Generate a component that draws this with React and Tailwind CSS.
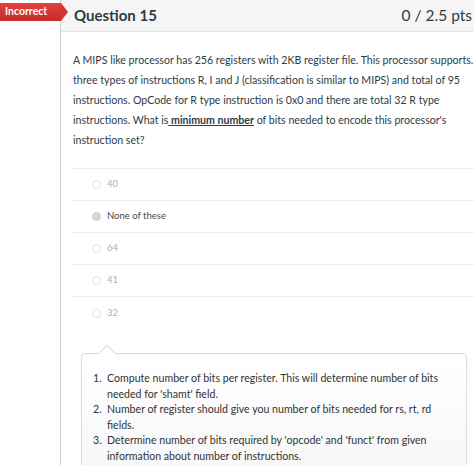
import React from 'react';

const answers = [
  { label: '40', selected: false },
  { label: 'None of these', selected: true },
  { label: '64', selected: false },
  { label: '41', selected: false },
  { label: '32', selected: false },
];

const hints = [
  ["Compute number of bits per register. This will determine number of bits", "needed for 'shamt' field."],
  ['Number of register should give you number of bits needed for rs, rt, rd', 'fields.'],
  ["Determine number of bits required by 'opcode' and 'funct' from given", 'information about number of instructions.'],
];

const Radio = ({ selected }) => (
  <span
    className={
      'w-[9px] h-[9px] rounded-full border shrink-0 ' +
      (selected ? 'border-[#cfcfcf] bg-[#d6d6d6]' : 'border-[#e0e0e0] bg-white')
    }
  />
);

export default function App() {
  return (
    <div className="relative w-[474px] h-[465px] overflow-hidden bg-white font-['Lato',sans-serif] text-[#333]">
      {/* Incorrect badge sits over the header edge */}
      <div className="absolute left-0 top-[3px] h-[18px] flex items-center z-10">
        <div className="h-full w-[61px] pl-[5px] flex items-center bg-gradient-to-b from-[#e4413d] to-[#c52a27] text-white text-[10.5px] font-bold">
          Incorrect
        </div>
        <div className="w-0 h-0 border-y-[9px] border-y-transparent border-l-[7px] border-l-[#d4352f]" />
      </div>

      <div className="flex h-full">
        <div className="w-[60px] shrink-0" />
        <div className="flex-1 border-l border-[#cfcfcf] min-w-0">
          {/* Header */}
          <div className="h-[32px] bg-[#f5f5f5] border-b border-[#e2e2e2] flex items-center justify-between pl-[13px] pr-[2px]">
            <span className="text-[15px] font-bold text-[#2d3b45]">Question 15</span>
            <span className="text-[15.5px] text-[#2d3b45]">0 / 2.5 pts</span>
          </div>

          {/* Question text */}
          <div className="pl-[12px] pt-[18px] pb-[18px] text-[10.6px] leading-[20px] whitespace-nowrap text-[#2d3b45]">
            <p>A MIPS like processor has 256 registers with 2KB register file. This processor supports.</p>
            <p>three types of instructions R, I and J (classification is similar to MIPS) and total of 95</p>
            <p>instructions. OpCode for R type instruction is 0x0 and there are total 32 R type</p>
            <p>
              instructions. What is<u className="font-bold"> minimum number</u> of bits needed to encode this processor's
            </p>
            <p>instruction set?</p>
          </div>

          {/* Answers */}
          <div className="ml-[12px] border-t border-[#ececec]">
            {answers.map((a, i) => (
              <div
                key={a.label}
                className={
                  'h-[32px] flex items-center gap-[6px] pl-[19px] text-[9.5px] ' +
                  (i < answers.length - 1 ? 'border-b border-[#ececec] ' : '') +
                  (a.selected ? 'text-[#4a4a4a]' : 'text-[#b0b0b0]')
                }
              >
                <Radio selected={a.selected} />
                <span>{a.label}</span>
              </div>
            ))}
          </div>

          {/* Comment */}
          <div className="relative mt-[24px] ml-[20px] mr-[7px] border border-[#dcdcdc] rounded-[4px] bg-gradient-to-b from-white to-[#f7f7f7] shadow-[0_1px_2px_rgba(0,0,0,0.06)] pt-[17px] pb-[10px] pl-[11px] pr-[8px]">
            <span className="absolute -top-[7px] left-[19px] w-[12px] h-[12px] rotate-45 bg-white border-l border-t border-[#dcdcdc]" />
            <ol className="text-[10.6px] leading-[15.5px] text-[#333] whitespace-nowrap">
              {hints.map((lines, i) => (
                <li key={i} className="flex">
                  <span className="w-[14px] shrink-0">{i + 1}.</span>
                  <span>
                    {lines[0]}
                    <br />
                    {lines[1]}
                  </span>
                </li>
              ))}
            </ol>
          </div>
        </div>
      </div>
    </div>
  );
}
